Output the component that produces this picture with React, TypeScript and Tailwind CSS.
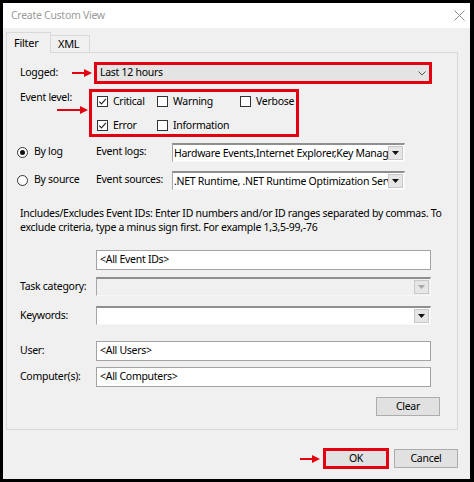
import React from "react";

const RED = "#e3000f";

function Arrow({ w }: { w: number }) {
  return (
    <svg width={w} height={8} viewBox={`0 0 ${w} 8`} className="block">
      <line x1={0} y1={4} x2={w - 6} y2={4} stroke={RED} strokeWidth={2} />
      <polygon points={`${w - 8},0 ${w},4 ${w - 8},8`} fill={RED} />
    </svg>
  );
}

function Check({ checked, label }: { checked?: boolean; label: string }) {
  return (
    <div className="flex items-center gap-[5px]">
      <div className="flex h-[11px] w-[11px] items-center justify-center border border-[#333] bg-white">
        {checked && (
          <svg width="9" height="9" viewBox="0 0 9 9">
            <path d="M1.2 4.6 L3.5 6.9 L7.9 1.8" stroke="#222" strokeWidth="1.1" fill="none" />
          </svg>
        )}
      </div>
      <span>{label}</span>
    </div>
  );
}

function Radio({ checked, label }: { checked?: boolean; label: string }) {
  return (
    <div className="flex items-center gap-[6px]">
      <div className="flex h-[11px] w-[11px] items-center justify-center rounded-full border border-[#333] bg-white">
        {checked && <div className="h-[5px] w-[5px] rounded-full bg-[#111]" />}
      </div>
      <span>{label}</span>
    </div>
  );
}

function DropBtn({ disabled }: { disabled?: boolean }) {
  return (
    <div className="flex h-[14px] w-[15px] shrink-0 items-center justify-center border border-[#c8c8c8] bg-[#e6e6e6]">
      <svg width="7" height="4" viewBox="0 0 7 4">
        <polygon points="0,0 7,0 3.5,4" fill={disabled ? "#a8a8a8" : "#111"} />
      </svg>
    </div>
  );
}

function Sunken({
  w,
  text,
  disabled,
}: {
  w: string;
  text?: string;
  disabled?: boolean;
}) {
  return (
    <div
      className={`flex h-[19px] ${w} items-center border-t-2 border-l border-b border-r border-t-[#8f8f8f] border-l-[#a6a6a6] border-b-[#f7f7f7] border-r-[#f7f7f7] pr-[1px] ${
        disabled ? "bg-[#f0f0f0]" : "bg-white"
      }`}
    >
      <div className="min-w-0 flex-1 overflow-hidden whitespace-nowrap pl-[1px] leading-[14px]">{text}</div>
      <DropBtn disabled={disabled} />
    </div>
  );
}

function TextBox({ text }: { text: string }) {
  return (
    <div className="flex h-[20px] w-[335px] items-center border border-[#a3a3a3] bg-white pl-[3px]">
      {text}
    </div>
  );
}

function Button({ children, w }: { children: React.ReactNode; w: string }) {
  return (
    <div className={`flex h-[19px] ${w} items-center justify-center border border-[#adadad] bg-[#e1e1e1]`}>
      {children}
    </div>
  );
}

export default function App() {
  return (
    <div className="h-[482px] w-[474px] bg-black pb-[3px] pl-[3px] pr-[4px] pt-[3px] font-['Noto_Sans',sans-serif] text-[10.5px] tracking-[-0.28px] text-black">
      <div className="flex h-full w-full flex-col bg-[#f0f0f0]">
        {/* title bar */}
        <div className="flex h-[25px] items-center justify-between bg-white pl-[8px] pr-[5px]">
          <span className="text-[10.5px] text-[#9b9b9b]">Create Custom View</span>
          <svg width="11" height="11" viewBox="0 0 11 11">
            <path d="M0.5 0.5 L10.5 10.5 M10.5 0.5 L0.5 10.5" stroke="#8a8a8a" strokeWidth="1" />
          </svg>
        </div>

        {/* body */}
        <div className="flex-1 pl-[3px] pt-[4px]">
          {/* tabs */}
          <div className="flex h-[20px] items-end">
            <div className="relative z-10 -mb-px flex h-[21px] w-[45px] items-center border border-b-0 border-[#d9d9d9] bg-[#f0f0f0] pl-[7px] text-[11px]">
              Filter
            </div>
            <div className="flex h-[17px] w-[39px] items-center border border-b-0 border-l-0 border-[#d9d9d9] bg-[#f0f0f0] pl-[7px] text-[11px]">
              XML
            </div>
          </div>

          {/* panel */}
          <div className="flex h-[378px] w-[452px] flex-col border border-[#d9d9d9] bg-[#f0f0f0] pl-[10px] pt-[9px]">
            {/* Logged */}
            <div className="flex h-[22px] items-center">
              <span className="ml-[3px] w-[52px]">Logged:</span>
              <Arrow w={20} />
              <div className="ml-[2px] h-[22px] w-[338px] border-[3px] border-[#e3000f]">
                <div className="flex h-full items-center justify-between bg-[#e4e4e4] pl-[3px] pr-[3px]">
                  <span>Last 12 hours</span>
                  <svg width="8" height="5" viewBox="0 0 8 5">
                    <path d="M0.5 0.5 L4 4 L7.5 0.5" stroke="#555" strokeWidth="1" fill="none" />
                  </svg>
                </div>
              </div>
            </div>

            {/* Event level */}
            <div className="mt-[5px] flex h-[48px]">
              <div className="ml-[3px] flex w-[69px] flex-col">
                <span className="leading-[16px]">Event level:</span>
                <div className="mt-[1px] flex justify-end pr-[1px]">
                  <Arrow w={31} />
                </div>
              </div>
              <div className="h-[48px] w-[210px] border-[3px] border-[#e3000f] pl-[5px] pt-[1px]">
                <div className="grid grid-cols-[60px_83px_auto] grid-rows-[16px_16px] gap-y-[8px] leading-[16px]">
                  <Check checked label="Critical" />
                  <Check label="Warning" />
                  <Check label="Verbose" />
                  <Check checked label="Error" />
                  <Check label="Information" />
                </div>
              </div>
            </div>

            {/* By log */}
            <div className="mt-[6px] flex h-[18px] items-center">
              <div className="w-[79px]">
                <Radio checked label="By log" />
              </div>
              <span className="w-[76px]">Event logs:</span>
              <Sunken w="w-[233px]" text="Hardware Events,Internet Explorer,Key Management Service" />
            </div>

            {/* By source */}
            <div className="mt-[10px] flex h-[18px] items-center">
              <div className="w-[79px]">
                <Radio label="By source" />
              </div>
              <span className="w-[76px]">Event sources:</span>
              <Sunken w="w-[233px]" text=".NET Runtime, .NET Runtime Optimization Service" />
            </div>

            {/* description */}
            <div className="ml-[3px] mt-[17px] whitespace-nowrap leading-[14px]">
              Includes/Excludes Event IDs: Enter ID numbers and/or ID ranges separated by commas. To
              <br />
              exclude criteria, type a minus sign first. For example 1,3,5-99,-76
            </div>

            {/* event IDs */}
            <div className="ml-[79px] mt-[16px]">
              <TextBox text="<All Event IDs>" />
            </div>

            {/* Task category */}
            <div className="mt-[7px] flex h-[19px] items-center">
              <span className="ml-[3px] w-[76px]">Task category:</span>
              <Sunken w="w-[335px]" disabled />
            </div>

            {/* Keywords */}
            <div className="mt-[10px] flex h-[19px] items-center">
              <span className="ml-[3px] w-[76px]">Keywords:</span>
              <Sunken w="w-[335px]" />
            </div>

            {/* User */}
            <div className="mt-[16px] flex h-[20px] items-center">
              <span className="ml-[3px] w-[76px]">User:</span>
              <TextBox text="<All Users>" />
            </div>

            {/* Computers */}
            <div className="mt-[6px] flex h-[20px] items-center">
              <span className="ml-[3px] w-[76px]">Computer(s):</span>
              <TextBox text="<All Computers>" />
            </div>

            {/* Clear */}
            <div className="mt-[10px] flex justify-end pr-[17px]">
              <Button w="w-[64px]">Clear</Button>
            </div>
          </div>

          {/* bottom buttons */}
          <div className="mt-[18px] flex items-center justify-end pr-[12px]">
            <Arrow w={20} />
            <div className="ml-[3px] h-[21px] w-[66px] border-[3px] border-[#e3000f]">
              <div className="flex h-full items-center justify-center bg-[#e1e1e1]">OK</div>
            </div>
            <div className="ml-[5px]">
              <Button w="w-[64px]">Cancel</Button>
            </div>
          </div>
        </div>
      </div>
    </div>
  );
}
